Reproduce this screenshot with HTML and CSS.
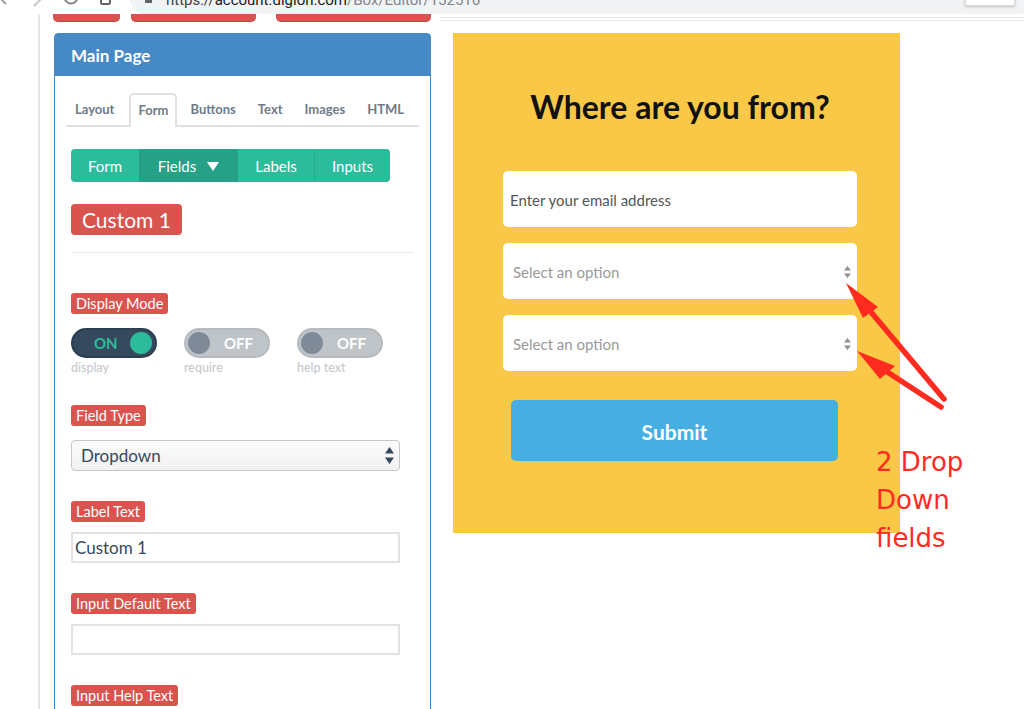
FILE: index.html
```html
<!DOCTYPE html>
<html lang="en">
<head>
    <meta charset="UTF-8">
    <meta name="viewport" content="width=device-width, initial-scale=1.0">
    <title>Box Editor</title>
    <link rel="stylesheet" href="styles.css">
</head>
<body>
    <div class="chrome">
        <svg class="nav-icons" width="130" height="14" viewBox="0 0 130 14">
            <path d="M6 -8 L0 -2 L6 4" fill="none" stroke="#9aa0a6" stroke-width="2"/>
            <path d="M34 -6 L40 0 L34 6" fill="none" stroke="#c4c7ca" stroke-width="2"/>
            <circle cx="71" cy="-3" r="6.5" fill="none" stroke="#80868b" stroke-width="2"/>
            <rect x="101" y="-8" width="9" height="12" rx="1.5" fill="none" stroke="#5f6368" stroke-width="2"/>
        </svg>
        <div class="url-bar">
            <span class="lock"></span>
            <span class="url"><span class="scheme">https://</span><span class="host">account.digion.com</span>/Box/Editor/152516</span>
        </div>
        <div class="popup"></div>
    </div>

    <div class="app">
        <div class="gutter"></div>
        <div class="workspace">
            <div class="toolbar">
                <span class="stub stub-a"></span>
                <span class="stub stub-b"></span>
                <span class="stub stub-c"></span>
                <div class="toolbar-rule"></div>
            </div>

            <div class="columns">
                <div class="editor">
                    <div class="editor-header">Main Page</div>
                    <div class="editor-body">
                        <div class="tabs">
                            <a class="tab">Layout</a>
                            <a class="tab active">Form</a>
                            <a class="tab">Buttons</a>
                            <a class="tab">Text</a>
                            <a class="tab">Images</a>
                            <a class="tab">HTML</a>
                        </div>

                        <div class="btn-group">
                            <span class="seg seg-form">Form</span>
                            <span class="seg seg-fields">Fields
                                <svg class="caret" width="12" height="9" viewBox="0 0 12 9"><path d="M0 0 H12 L6 9 Z" fill="#fff"/></svg>
                            </span>
                            <span class="seg seg-labels">Labels</span>
                            <span class="seg seg-inputs">Inputs</span>
                        </div>

                        <div class="field-title">Custom 1</div>
                        <div class="divider"></div>

                        <div class="badge badge-first">Display Mode</div>
                        <div class="toggles">
                            <div class="toggle-item">
                                <div class="switch on"><span class="switch-text">ON</span><span class="knob"></span></div>
                                <div class="toggle-label">display</div>
                            </div>
                            <div class="toggle-item">
                                <div class="switch off"><span class="knob"></span><span class="switch-text">OFF</span></div>
                                <div class="toggle-label">require</div>
                            </div>
                            <div class="toggle-item">
                                <div class="switch off"><span class="knob"></span><span class="switch-text">OFF</span></div>
                                <div class="toggle-label">help text</div>
                            </div>
                        </div>

                        <div class="badge">Field Type</div>
                        <div class="select-box">
                            <span>Dropdown</span>
                            <svg width="9" height="17" viewBox="0 0 9 17"><path d="M4.5 0 L9 6.5 H0 Z M0 10.5 H9 L4.5 17 Z" fill="#34495e"/></svg>
                        </div>

                        <div class="badge">Label Text</div>
                        <div class="text-input">Custom 1</div>

                        <div class="badge">Input Default Text</div>
                        <div class="text-input"></div>

                        <div class="badge">Input Help Text</div>
                    </div>
                </div>

                <div class="preview">
                    <h1 class="preview-title">Where are you from?</h1>
                    <div class="pv-field pv-email">Enter your email address</div>
                    <div class="pv-field pv-select">
                        <span>Select an option</span>
                        <svg width="7" height="12" viewBox="0 0 7 12"><path d="M3.5 0 L7 4.5 H0 Z M0 7.5 H7 L3.5 12 Z" fill="#8f8f8f"/></svg>
                    </div>
                    <div class="pv-field pv-select">
                        <span>Select an option</span>
                        <svg width="7" height="12" viewBox="0 0 7 12"><path d="M3.5 0 L7 4.5 H0 Z M0 7.5 H7 L3.5 12 Z" fill="#8f8f8f"/></svg>
                    </div>
                    <div class="pv-submit">Submit</div>
                </div>
            </div>
        </div>
    </div>

    <!-- annotation drawn over the screenshot -->
    <svg class="arrows" width="120" height="150" viewBox="838 272 120 150">
        <line x1="944" y1="399" x2="860" y2="299" stroke="#ff2b1f" stroke-width="5.5" stroke-linecap="round"/>
        <polygon points="846,283 863,318 878,307" fill="#ff2b1f"/>
        <line x1="941" y1="407" x2="872" y2="362" stroke="#ff2b1f" stroke-width="5.5" stroke-linecap="round"/>
        <polygon points="857,351 880,379 895,366" fill="#ff2b1f"/>
    </svg>
    <div class="note">2 Drop<br>Down<br>fields</div>
</body>
</html>
```

FILE: styles.css
```css
body {
    margin: 0;
    width: 1024px;
    height: 709px;
    overflow: hidden;
    position: relative;
    background: #fff;
    font-family: Lato, "Open Sans", Arial, sans-serif;
}

/* browser strip, cut off at the top */
.chrome {
    height: 14px;
    display: flex;
    position: relative;
    overflow: hidden;
    background: #fff;
}
.nav-icons {
    flex: none;
    display: block;
}
.url-bar {
    flex: 1;
    background: #f1f3f4;
    border-radius: 0 0 0 14px;
    display: flex;
    align-items: flex-start;
    overflow: hidden;
}
.lock {
    width: 7px;
    height: 3px;
    background: #5f6368;
    margin-left: 15px;
    flex: none;
}
.url {
    margin-left: 14px;
    margin-top: -8px;
    font-family: Roboto, Arial, sans-serif;
    font-size: 15px;
    line-height: 16px;
    color: #80868b;
    white-space: nowrap;
}
.url .scheme {
    color: #3c4043;
}
.url .host {
    color: #202124;
}
.popup {
    position: absolute;
    right: 9px;
    top: -4px;
    width: 48px;
    height: 8px;
    background: #fff;
    border: 1px solid #dadce0;
    box-shadow: 0 1px 3px rgba(0, 0, 0, 0.2);
}

.app {
    display: flex;
    height: 695px;
}
.gutter {
    width: 38px;
    flex: none;
    border-right: 2px solid #e6e6e6;
}
.workspace {
    flex: 1;
}

.toolbar {
    height: 19px;
    display: flex;
    align-items: flex-start;
}
.stub {
    height: 7px;
    background: #d9534f;
    border-bottom: 1px solid #c8423e;
    border-radius: 0 0 5px 5px;
}
.stub-a {
    margin-left: 13px;
    width: 67px;
}
.stub-b {
    margin-left: 11px;
    width: 125px;
}
.stub-c {
    margin-left: 20px;
    width: 155px;
}
.toolbar-rule {
    flex: 1;
    margin-left: 9px;
    margin-top: 3px;
    height: 2px;
    border-top: 1px solid #e8e8e8;
    border-bottom: 1px solid #e8e8e8;
}

.columns {
    display: flex;
    align-items: flex-start;
}

/* editor panel */
.editor {
    margin-left: 14px;
    width: 377px;
    height: 700px;
    box-sizing: border-box;
    border: 1px solid #4589c6;
    border-radius: 4px 4px 0 0;
    flex: none;
}
.editor-header {
    height: 42px;
    line-height: 43px;
    background: #4589c6;
    color: #fff;
    font-size: 17px;
    font-weight: bold;
    padding-left: 16px;
}
.editor-body {
    padding: 17px 16px 0;
    display: flex;
    flex-direction: column;
    align-items: flex-start;
}
.tabs {
    align-self: stretch;
    display: flex;
    margin: 0 -5px;
    border-bottom: 2px solid #dde0e4;
    height: 32px;
}
.tab {
    padding: 0 9px;
    margin-right: 4px;
    line-height: 32px;
    font-size: 13px;
    font-weight: bold;
    color: #6f7b88;
}
.tab:first-child {
    padding-right: 11px;
}
.tab.active {
    padding: 0 7px;
    border: 2px solid #dde0e4;
    border-bottom: none;
    border-radius: 5px 5px 0 0;
    background: #fff;
    height: 32px;
    line-height: 30px;
    margin-bottom: -2px;
}

.btn-group {
    margin-top: 22px;
    display: flex;
    height: 33px;
    border-radius: 4px;
    overflow: hidden;
}
.seg {
    display: flex;
    align-items: center;
    justify-content: center;
    background: #2dbc9b;
    color: #fff;
    font-size: 15px;
}
.seg-form {
    width: 68px;
}
.seg-fields {
    width: 99px;
    background: #26a187;
}
.seg-fields .caret {
    margin-left: 11px;
    margin-top: 1px;
}
.seg-labels {
    width: 76px;
}
.seg-inputs {
    width: 75px;
    border-left: 1px solid #27a98c;
}

.field-title {
    margin-top: 22px;
    height: 31px;
    line-height: 31px;
    padding: 0 11px;
    background: #d9534f;
    color: #fff;
    font-size: 21px;
    border-radius: 4px;
}
.divider {
    align-self: stretch;
    margin-top: 17px;
    height: 1px;
    background: #e9e9e9;
}

.badge {
    margin-top: 30px;
    height: 21px;
    line-height: 21px;
    padding: 0 5px;
    background: #d9534f;
    color: #fff;
    font-size: 14.5px;
    border-radius: 3px;
}
.badge-first {
    margin-top: 40px;
}

.toggles {
    margin-top: 14px;
    display: flex;
    gap: 27px;
}
.switch {
    width: 86px;
    height: 30px;
    box-sizing: border-box;
    border-radius: 15px;
    display: flex;
    align-items: center;
    font-size: 15px;
    font-weight: bold;
}
.switch.on {
    background: #34495e;
    border: 2px solid #2c3e50;
    color: #2dbc9b;
    justify-content: space-between;
    padding: 0 3px 0 21px;
}
.switch.off {
    background: #bfc4c8;
    border: 2px solid #b4babf;
    color: #fff;
    padding: 0 15px 0 2px;
    justify-content: space-between;
}
.knob {
    width: 22px;
    height: 22px;
    border-radius: 50%;
}
.switch.on .knob {
    background: #2dbc9b;
}
.switch.off .knob {
    background: #7f8a99;
}
.toggle-label {
    margin-top: 2px;
    font-size: 12.5px;
    line-height: 15px;
    color: #c2c6ca;
}

.select-box {
    margin-top: 14px;
    width: 329px;
    height: 31px;
    box-sizing: border-box;
    border: 1px solid #c3c7cc;
    border-radius: 4px;
    background: linear-gradient(#fbfbfb, #f1f1f1);
    display: flex;
    align-items: center;
    justify-content: space-between;
    padding: 0 5px 0 9px;
    font-size: 17px;
    color: #34495e;
}
.text-input {
    margin-top: 10px;
    width: 329px;
    height: 31px;
    box-sizing: border-box;
    border: 2px solid #e0e2e5;
    padding-left: 2px;
    line-height: 27px;
    font-size: 17px;
    color: #34495e;
}

/* live preview */
.preview {
    margin-left: 22px;
    width: 447px;
    height: 500px;
    box-sizing: border-box;
    padding: 55px 43px 0 50px;
    background: #f9c846;
    flex: none;
}
.preview-title {
    margin: 0;
    font-size: 32px;
    line-height: 38px;
    font-weight: bold;
    text-align: center;
    color: #111;
}
.pv-field {
    height: 56px;
    background: #fff;
    border-radius: 5px;
    display: flex;
    align-items: center;
    font-size: 15px;
    margin-top: 16px;
}
.pv-email {
    margin-top: 45px;
    padding: 2px 0 0 7px;
    box-sizing: border-box;
    color: #555;
}
.pv-select {
    justify-content: space-between;
    padding: 2px 6px 0 10px;
    box-sizing: border-box;
    color: #999;
}
.pv-submit {
    margin: 29px 0 0 8px;
    width: 327px;
    height: 61px;
    line-height: 63px;
    border-radius: 5px;
    background: #46aee3;
    color: #fff;
    text-align: center;
    font-size: 21px;
    font-weight: bold;
}

/* red annotation */
.arrows {
    position: absolute;
    left: 838px;
    top: 272px;
}
.note {
    position: absolute;
    left: 876px;
    top: 443px;
    font-family: "DejaVu Sans", Verdana, sans-serif;
    font-size: 26px;
    line-height: 38px;
    color: #ff2b1f;
}
```
